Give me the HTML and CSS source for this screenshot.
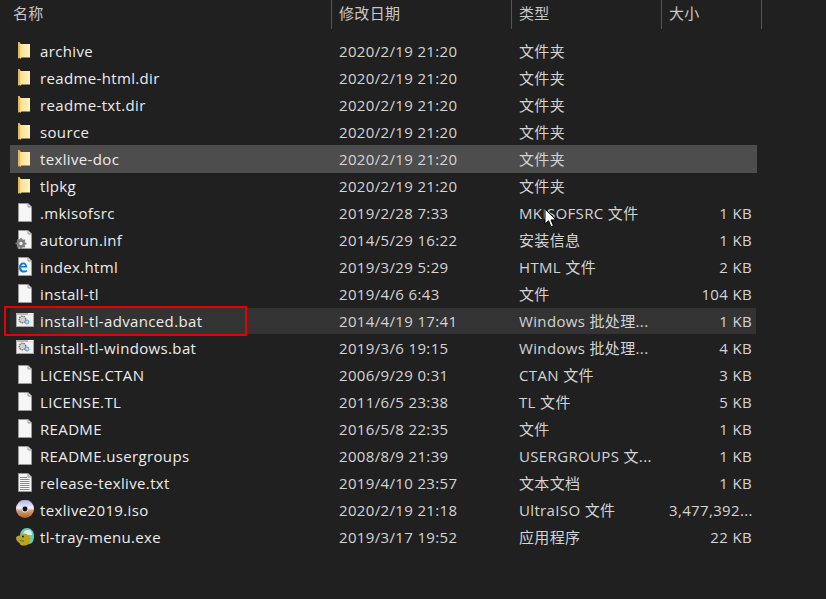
FILE: index.html
```html
<!DOCTYPE html>
<html lang="zh-CN">
<head>
    <meta charset="UTF-8">
    <title>texlive</title>
    <link rel="stylesheet" href="styles.css">
</head>
<body>
    <svg class="defs" width="0" height="0">
        <defs>
            <linearGradient id="folderFill" x1="0" y1="0" x2="1" y2="0">
                <stop offset="0" stop-color="#f8dc8c"/>
                <stop offset="0.4" stop-color="#fde8a8"/>
                <stop offset="1" stop-color="#fff2c8"/>
            </linearGradient>
            <linearGradient id="discFill" x1="0" y1="0" x2="0" y2="1">
                <stop offset="0" stop-color="#6f6fe8"/>
                <stop offset="0.45" stop-color="#e8e8f4"/>
                <stop offset="0.6" stop-color="#d8a070"/>
                <stop offset="1" stop-color="#b05c2c"/>
            </linearGradient>
            <symbol id="folder" viewBox="0 0 20 20">
                <path d="M3 1h1.500l1 1.500V17L3 17.500z" fill="#e8b84c"/>
                <path d="M5 3h10v13.500H6.500L5 18z" fill="url(#folderFill)"/>
            </symbol>
            <symbol id="file" viewBox="0 0 20 20">
                <path d="M3.500 .5h9.500l3.500 3.500v14.500h-13z" fill="#f6f6f6" stroke="#9a9a9a"/>
                <path d="M13 .5v3.500h3.500" fill="#e0e0e0" stroke="#9a9a9a"/>
            </symbol>
            <symbol id="inf" viewBox="0 0 20 20">
                <use href="#file"/>
                <circle cx="6" cy="13.500" r="4.500" fill="#8a8a8a"/>
                <path d="M6 8v11M.5 13.500h11M2.200 9.700l7.600 7.600M9.800 9.700l-7.600 7.600" stroke="#7a7a7a" stroke-width="1.600"/>
                <circle cx="6" cy="13.500" r="1.700" fill="#eee"/>
            </symbol>
            <symbol id="edge" viewBox="0 0 20 20">
                <use href="#file"/>
                <path d="M4.800 10.500h7.400c0-3-1.500-5-3.900-5-2.600 0-4.300 2.100-4.300 5 0 3 2 5 4.700 5 1.300 0 2.400-.3 3.200-.8v-2c-.9.600-1.900.9-2.900.9-1.500 0-2.700-1-2.700-2.600zM6.400 9c.2-1.100 1-1.800 2-1.800s1.600.7 1.700 1.800z" fill="#0a78d7" fill-rule="evenodd"/>
            </symbol>
            <symbol id="bat" viewBox="0 0 20 20">
                <rect x="1.500" y="2.500" width="17" height="13" fill="#efefef" stroke="#a8a8a8"/>
                <rect x="1" y="2" width="18" height="2" fill="#b8b8b8"/>
                <rect x="13" y="2" width="5" height="1.500" fill="#fff"/>
                <circle cx="7.500" cy="8.500" r="3.300" fill="#d0d0d0" stroke="#777" stroke-width="1.400" stroke-dasharray="1.500 .8"/>
                <circle cx="12" cy="11" r="2" fill="#bcd8ee" stroke="#5a9ccc"/>
            </symbol>
            <symbol id="text" viewBox="0 0 20 20">
                <use href="#file"/>
                <path d="M5 4.500h7M5 6.500h9.500M5 8.500h9.500M5 10.500h9.500M5 12.500h9.500M5 14.500h9.500M5 16.500h9.500" stroke="#8c8c8c"/>
            </symbol>
            <symbol id="disc" viewBox="0 0 20 20">
                <circle cx="10" cy="9" r="9" fill="url(#discFill)"/>
                <path d="M1 8.500a9 9 0 0 1 18 0h-5l-4 1-4-1z" fill="#fff" opacity=".45"/>
                <circle cx="10" cy="9" r="3.400" fill="#d8d8d8"/>
                <circle cx="10" cy="9" r="2.400" fill="#111"/>
            </symbol>
            <symbol id="tray" viewBox="0 0 20 20">
                <path d="M5 9c0-5 3-8 7-8s7 3 7 8-2 8-5 8z" fill="#6cc8b0"/>
                <path d="M8 8c0-3 2-5 5-5s4 2 4 5z" fill="#d8f2ea"/>
                <path d="M1 11c0-1.500 2-2.500 4-2.500 1 0 1.500-2 4-2s6 2 6 5.500-1 6-5 6.500c-3 .4-5-.3-5.500-2.500C3 15.500 1 13 1 11z" fill="#b8a622"/>
                <path d="M9 14c-1.500 0-3 0-4.500-1" stroke="#6b5f10" fill="none"/>
                <circle cx="8" cy="9.500" r="1" fill="#222"/>
            </symbol>
        </defs>
    </svg>

    <div class="chevron"></div>

    <div class="header">
        <div class="head-cell col-name">名称</div>
        <div class="head-cell col-date">修改日期</div>
        <div class="head-cell col-type">类型</div>
        <div class="head-cell col-size">大小</div>
    </div>

    <div class="list">
        <div class="row">
            <div class="name"><svg class="icon"><use href="#folder"/></svg>archive</div>
            <div>2020/2/19 21:20</div><div>文件夹</div><div class="size"></div>
        </div>
        <div class="row">
            <div class="name"><svg class="icon"><use href="#folder"/></svg>readme-html.dir</div>
            <div>2020/2/19 21:20</div><div>文件夹</div><div class="size"></div>
        </div>
        <div class="row">
            <div class="name"><svg class="icon"><use href="#folder"/></svg>readme-txt.dir</div>
            <div>2020/2/19 21:20</div><div>文件夹</div><div class="size"></div>
        </div>
        <div class="row">
            <div class="name"><svg class="icon"><use href="#folder"/></svg>source</div>
            <div>2020/2/19 21:20</div><div>文件夹</div><div class="size"></div>
        </div>
        <div class="row selected">
            <div class="name"><svg class="icon"><use href="#folder"/></svg>texlive-doc</div>
            <div>2020/2/19 21:20</div><div>文件夹</div><div class="size"></div>
        </div>
        <div class="row">
            <div class="name"><svg class="icon"><use href="#folder"/></svg>tlpkg</div>
            <div>2020/2/19 21:20</div><div>文件夹</div><div class="size"></div>
        </div>
        <div class="row">
            <div class="name"><svg class="icon"><use href="#file"/></svg>.mkisofsrc</div>
            <div>2019/2/28 7:33</div><div>MKISOFSRC 文件</div><div class="size">1 KB</div>
        </div>
        <div class="row">
            <div class="name"><svg class="icon"><use href="#inf"/></svg>autorun.inf</div>
            <div>2014/5/29 16:22</div><div>安装信息</div><div class="size">1 KB</div>
        </div>
        <div class="row">
            <div class="name"><svg class="icon"><use href="#edge"/></svg>index.html</div>
            <div>2019/3/29 5:29</div><div>HTML 文件</div><div class="size">2 KB</div>
        </div>
        <div class="row">
            <div class="name"><svg class="icon"><use href="#file"/></svg>install-tl</div>
            <div>2019/4/6 6:43</div><div>文件</div><div class="size">104 KB</div>
        </div>
        <div class="row hover">
            <div class="name"><svg class="icon"><use href="#bat"/></svg>install-tl-advanced.bat</div>
            <div>2014/4/19 17:41</div><div>Windows 批处理...</div><div class="size">1 KB</div>
        </div>
        <div class="row">
            <div class="name"><svg class="icon"><use href="#bat"/></svg>install-tl-windows.bat</div>
            <div>2019/3/6 19:15</div><div>Windows 批处理...</div><div class="size">4 KB</div>
        </div>
        <div class="row">
            <div class="name"><svg class="icon"><use href="#file"/></svg>LICENSE.CTAN</div>
            <div>2006/9/29 0:31</div><div>CTAN 文件</div><div class="size">3 KB</div>
        </div>
        <div class="row">
            <div class="name"><svg class="icon"><use href="#file"/></svg>LICENSE.TL</div>
            <div>2011/6/5 23:38</div><div>TL 文件</div><div class="size">5 KB</div>
        </div>
        <div class="row">
            <div class="name"><svg class="icon"><use href="#file"/></svg>README</div>
            <div>2016/5/8 22:35</div><div>文件</div><div class="size">1 KB</div>
        </div>
        <div class="row">
            <div class="name"><svg class="icon"><use href="#file"/></svg>README.usergroups</div>
            <div>2008/8/9 21:39</div><div>USERGROUPS 文...</div><div class="size">1 KB</div>
        </div>
        <div class="row">
            <div class="name"><svg class="icon"><use href="#text"/></svg>release-texlive.txt</div>
            <div>2019/4/10 23:57</div><div>文本文档</div><div class="size">1 KB</div>
        </div>
        <div class="row">
            <div class="name"><svg class="icon"><use href="#disc"/></svg>texlive2019.iso</div>
            <div>2020/2/19 21:18</div><div>UltraISO 文件</div><div class="size">3,477,392...</div>
        </div>
        <div class="row">
            <div class="name"><svg class="icon"><use href="#tray"/></svg>tl-tray-menu.exe</div>
            <div>2019/3/17 19:52</div><div>应用程序</div><div class="size">22 KB</div>
        </div>
    </div>

    <div class="red-box"></div>
    <svg class="cursor" width="13" height="20" viewBox="0 0 13 20">
        <path d="M1 1v15l3.500-3.300 2.500 6 2.500-1-2.500-5.800h5z" fill="#fff" stroke="#000"/>
    </svg>
</body>
</html>
```

FILE: styles.css
```css
body {
    margin: 0;
    background: #202020;
    color: #d4d4d4;
    font-family: 'Open Sans', 'Noto Sans CJK SC', sans-serif;
    font-size: 15px;
    letter-spacing: 0.35px;
    height: 599px;
    overflow: hidden;
    position: relative;
}
.defs {
    position: absolute;
}
.chevron {
    position: absolute;
    left: 165px;
    top: -4px;
    width: 5px;
    height: 5px;
    border-left: 1px solid #aaa;
    border-top: 1px solid #aaa;
    transform: rotate(45deg);
}
.header {
    display: flex;
    height: 29px;
    line-height: 27px;
    color: #c8c8c8;
}
.head-cell {
    border-right: 1px solid #555;
    box-sizing: border-box;
    padding-left: 7px;
}
.col-name {
    width: 332px;
    padding-left: 13px;
}
.col-date {
    width: 180px;
}
.col-type {
    width: 150px;
}
.col-size {
    width: 100px;
}
.list {
    margin: 9px 0 0 10px;
    width: 747px;
}
.row {
    display: grid;
    grid-template-columns: 329px 180px 150px 83px;
    padding-right: 5px;
    height: 27px;
    line-height: 26px;
}
.row > div {
    white-space: nowrap;
}
.selected {
    background: #4d4d4d;
    box-shadow: 0 -1px 0 #4d4d4d;
}
.hover {
    background: linear-gradient(to right, #2a2a2a, #333 60px) no-repeat;
    background-size: 746px 26px;
}
.name {
    display: flex;
    align-items: flex-start;
    gap: 5px;
    padding-left: 5px;
    color: #ececec;
}
.icon {
    width: 20px;
    height: 20px;
    flex: none;
    margin-top: 3px;
}
.size {
    text-align: right;
}
.red-box {
    position: absolute;
    left: 4px;
    top: 306px;
    width: 239px;
    height: 26px;
    border: 2px solid #e60000;
}
.cursor {
    position: absolute;
    left: 544px;
    top: 208px;
}
```
